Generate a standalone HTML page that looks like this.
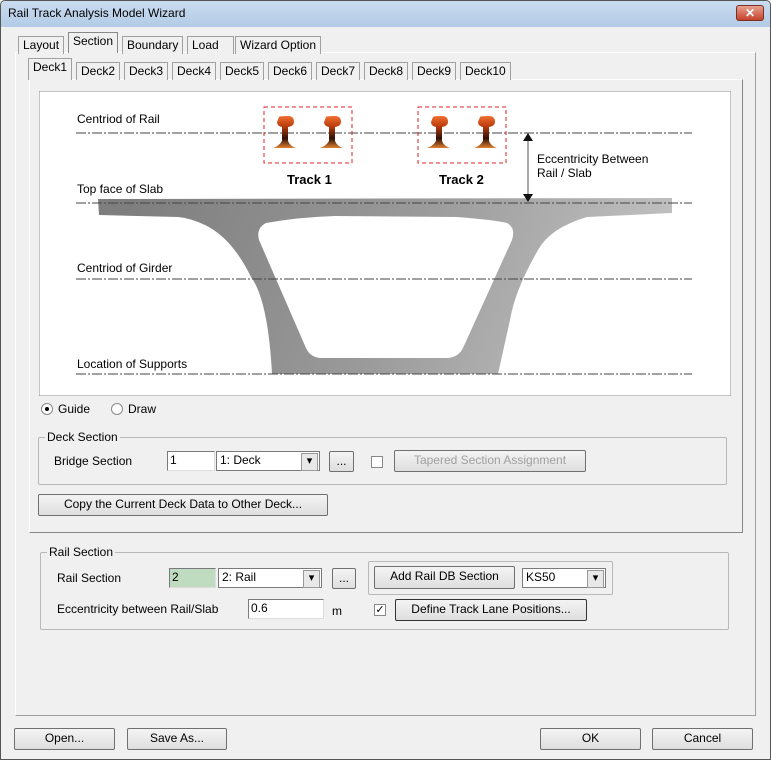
<!DOCTYPE html><html><head><style>
*{box-sizing:border-box}
body{margin:0;width:771px;height:760px;background:#f0f0f0;font-family:"Liberation Sans",sans-serif;font-size:12px;color:#000;position:relative;overflow:hidden}
.a{position:absolute}
.btn{position:absolute;background:linear-gradient(#f4f4f4,#dedede);border:1px solid #707070;border-radius:2px;text-align:center;font-size:12px;line-height:19px}
.tb{position:absolute;background:#fff;border:1px solid #7a7a7a;border-right-color:#ddd;border-bottom-color:#ddd;height:20px;padding-left:2px;line-height:17px}
.cb{position:absolute;background:#fff;border:1px solid #7a7a7a;height:20px;padding-left:3px;line-height:17px}
.cb:after{content:"▾";position:absolute;right:1px;top:1px;width:15px;height:16px;background:#e8e8e8;border:1px solid #999;font-size:11px;line-height:14px;text-align:center}
.grp{position:absolute;border:1px solid #b8b8b8;border-radius:2px}
.grp span{position:absolute;top:-8px;left:6px;background:#f0f0f0;padding:0 2px}
.tab{position:absolute;top:0;height:18px;border:1px solid #a0a0a0;border-bottom:none;background:#f0f0f0;padding:0 4px;line-height:16px}
.chk{position:absolute;width:12px;height:12px;border:1px solid #888;background:#fff;font-size:11px;line-height:10px;text-align:center}
</style></head><body>
<div class="a" style="left:0;top:0;width:771px;height:760px;border:1px solid #555;border-radius:5px 5px 0 0"></div>
<div class="a" style="left:1px;top:1px;width:769px;height:26px;background:linear-gradient(#c9dcf0,#b3cbe6);border-radius:5px 5px 0 0"></div>
<div class="a" style="left:8px;top:6px;font-size:12px">Rail Track Analysis Model Wizard</div>
<div class="a" style="left:736px;top:5px;width:28px;height:16px;background:linear-gradient(#e8a090,#c4422c);border:1px solid #7a3020;border-radius:3px;color:#fff;font-size:12px;text-align:center;line-height:14px;font-weight:bold">✕</div>
<div class="a" style="left:6px;top:27px;width:759px;height:728px;background:#f0f0f0"></div>

<div class="a" style="left:15px;top:52px;width:741px;height:664px;border:1px solid #a0a0a0;border-top-color:#fff;border-left-color:#fff"></div>
<div class="a" style="left:15px;top:34px;width:320px;height:19px">
<div class="tab" style="left:3px;top:2px">Layout</div>
<div class="tab" style="left:53px;top:-2px;height:21px;border-color:#888;background:#f0f0f0">Section</div>
<div class="tab" style="left:107px;top:2px">Boundary</div>
<div class="tab" style="left:172px;top:2px;width:47px">Load</div>
<div class="tab" style="left:220px;top:2px">Wizard Option</div>
</div>
<div class="a" style="left:29px;top:79px;width:714px;height:454px;border:1px solid #888;border-top-color:#fff;border-left-color:#fff"></div>
<div class="a" style="left:28px;top:60px;width:500px;height:20px">
<div class="tab" style="left:0;top:-2px;height:22px">Deck1</div>
<div class="tab" style="left:48px;top:2px">Deck2</div>
<div class="tab" style="left:96px;top:2px">Deck3</div>
<div class="tab" style="left:144px;top:2px">Deck4</div>
<div class="tab" style="left:192px;top:2px">Deck5</div>
<div class="tab" style="left:240px;top:2px">Deck6</div>
<div class="tab" style="left:288px;top:2px">Deck7</div>
<div class="tab" style="left:336px;top:2px">Deck8</div>
<div class="tab" style="left:384px;top:2px">Deck9</div>
<div class="tab" style="left:432px;top:2px">Deck10</div>
</div>

<svg class="a" style="left:39px;top:91px" width="692" height="305" viewBox="39 91 692 305">
<defs><linearGradient id="g" gradientUnits="userSpaceOnUse" x1="150" y1="150" x2="650" y2="350"><stop offset="0" stop-color="#7e7e7e"/><stop offset=".5" stop-color="#999"/><stop offset="1" stop-color="#c4c4c4"/></linearGradient>
<linearGradient id="r" x1="0" y1="0" x2="0" y2="1"><stop offset="0" stop-color="#f07030"/><stop offset=".3" stop-color="#c04010"/><stop offset=".7" stop-color="#301008"/><stop offset="1" stop-color="#e08030"/></linearGradient></defs>
<rect x="39" y="91" width="692" height="305" fill="#fff" stroke="#888"/>
<path d="M98 199 L672 198 L672 213 L587 217 Q550 228 538 250 Q515 290 510 320 L498 374 L272 374 Q268 300 251 277 Q232 238 205 225 Q190 218 178 217 L99 215 Z" fill="url(#g)"/>
<path d="M266 223 Q300 217 335 216 L457 217 Q495 220 507 223 Q516 228 512 240 L463 348 Q458 358 446 358 L320 358 Q310 357 306 348 L259 240 Q256 228 266 223 Z" fill="#fff"/>
<g stroke="#444" stroke-width="1" stroke-dasharray="10,2,2,2" fill="none">
<line x1="76" y1="133" x2="692" y2="133"/><line x1="76" y1="203" x2="692" y2="203"/><line x1="76" y1="279" x2="692" y2="279"/><line x1="76" y1="374" x2="692" y2="374"/></g>
<g stroke="#e02020" stroke-dasharray="4,3" fill="none"><rect x="264" y="107" width="88" height="56"/><rect x="418" y="107" width="88" height="56"/></g>
<g fill="url(#r)">
<path id="rl" d="M279 117 Q279 116 288 116 Q294 116 294 122 Q294 126 288 127 L288 141 Q290 146 296 148 L273 148 Q279 146 282 141 L282 127 Q277 126 277 122 Z"/>
<use href="#rl" x="47"/><use href="#rl" x="154"/><use href="#rl" x="201"/></g>
<line x1="528" y1="138" x2="528" y2="196" stroke="#555"/>
<path d="M528 133 L523 141 L533 141 Z M528 202 L523 194 L533 194 Z" fill="#111"/>
<g font-family="Liberation Sans,sans-serif" font-size="12"><text x="77" y="123">Centriod of Rail</text><text x="77" y="193">Top face of Slab</text><text x="77" y="272">Centriod of Girder</text><text x="77" y="368">Location of Supports</text>
<text x="537" y="163">Eccentricity Between</text><text x="537" y="177">Rail / Slab</text>
<text x="287" y="184" font-weight="bold" font-size="13">Track 1</text><text x="439" y="184" font-weight="bold" font-size="13">Track 2</text></g>
</svg>

<div class="a" style="left:41px;top:403px;width:12px;height:12px;border:1px solid #888;border-radius:50%;background:#fff"><div style="margin:3px;width:4px;height:4px;border-radius:50%;background:#000"></div></div>
<div class="a" style="left:58px;top:402px">Guide</div>
<div class="a" style="left:111px;top:403px;width:12px;height:12px;border:1px solid #888;border-radius:50%;background:#fff"></div>
<div class="a" style="left:128px;top:402px">Draw</div>

<div class="grp" style="left:38px;top:437px;width:689px;height:48px"><span>Deck Section</span></div>
<div class="a" style="left:54px;top:454px">Bridge Section</div>
<div class="tb" style="left:167px;top:451px;width:48px">1</div>
<div class="cb" style="left:216px;top:451px;width:104px">1: Deck</div>
<div class="btn" style="left:329px;top:451px;width:25px;height:21px">...</div>
<div class="chk" style="left:371px;top:456px"></div>
<div class="btn" style="left:394px;top:450px;width:192px;height:22px;color:#a0a0a0">Tapered Section Assignment</div>
<div class="btn" style="left:38px;top:494px;width:290px;height:22px">Copy the Current Deck Data to Other Deck...</div>

<div class="grp" style="left:40px;top:552px;width:689px;height:78px"><span>Rail Section</span></div>
<div class="a" style="left:57px;top:571px">Rail Section</div>
<div class="tb" style="left:169px;top:568px;width:47px;background:#c0dcc0">2</div>
<div class="cb" style="left:218px;top:568px;width:104px">2: Rail</div>
<div class="btn" style="left:332px;top:568px;width:24px;height:21px">...</div>
<div class="grp" style="left:368px;top:561px;width:245px;height:34px"></div>
<div class="btn" style="left:374px;top:566px;width:141px;height:23px">Add Rail DB Section</div>
<div class="cb" style="left:522px;top:568px;width:84px">KS50</div>
<div class="a" style="left:57px;top:602px">Eccentricity between Rail/Slab</div>
<div class="tb" style="left:248px;top:599px;width:76px">0.6</div>
<div class="a" style="left:332px;top:604px">m</div>
<div class="chk" style="left:374px;top:604px">✓</div>
<div class="btn" style="left:395px;top:599px;width:192px;height:22px;border-color:#333">Define Track Lane Positions...</div>

<div class="btn" style="left:14px;top:728px;width:101px;height:22px">Open...</div>
<div class="btn" style="left:127px;top:728px;width:100px;height:22px">Save As...</div>
<div class="btn" style="left:540px;top:728px;width:101px;height:22px">OK</div>
<div class="btn" style="left:652px;top:728px;width:101px;height:22px">Cancel</div>
</body></html>
